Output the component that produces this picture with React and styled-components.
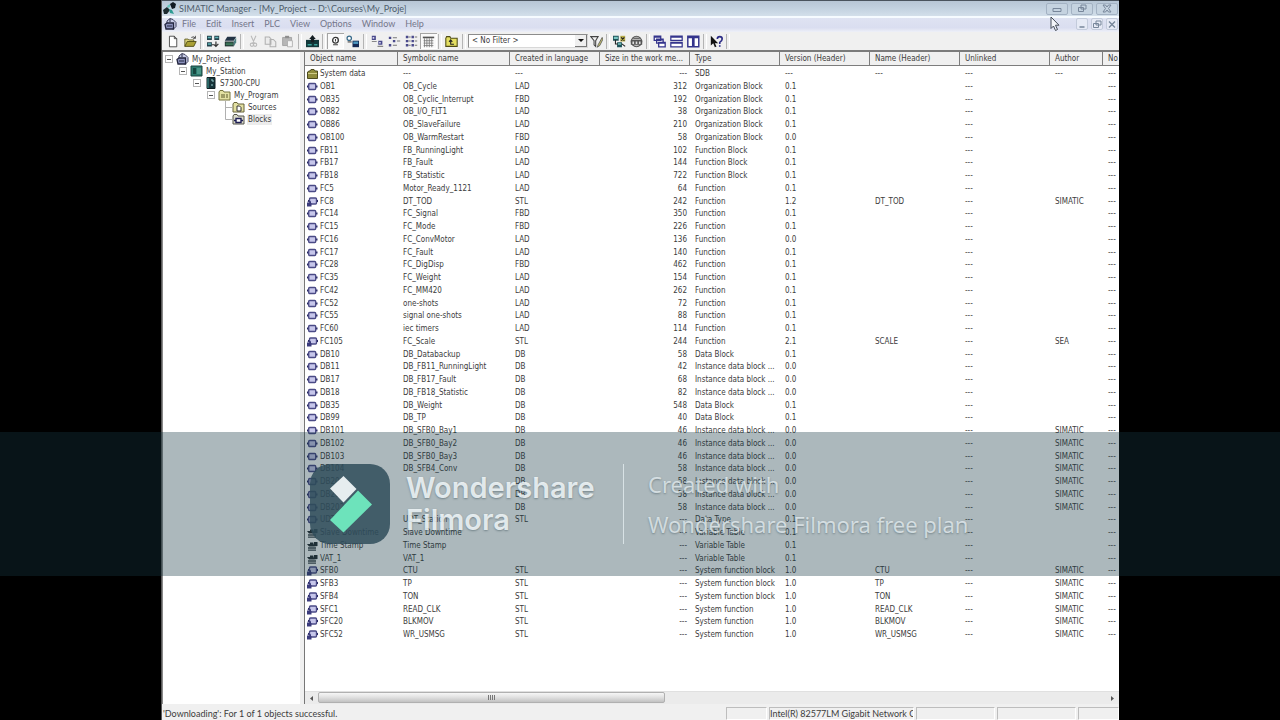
import React, { useState } from 'react';
import styled, { createGlobalStyle, css } from 'styled-components';

const GlobalStyle = createGlobalStyle`
  * {
    box-sizing: border-box;
  }
  body {
    margin: 0;
    background: #000;
    color: #3c3c3c;
    font-family: "DejaVu Sans Condensed", "Liberation Sans", sans-serif;
    font-size: 8px;
    line-height: 12px;
  }
  button, select {
    font: inherit;
    color: inherit;
    padding: 0;
    margin: 0;
    border: 0;
    background: none;
  }
  svg {
    display: block;
    flex-shrink: 0;
  }
`;

const Stage = styled.div`
  position: relative;
  min-height: 100vh;
  padding: 0 161px;
  display: flex;
`;

const Window = styled.div`
  position: relative;
  flex: 1;
  min-width: 0;
  display: flex;
  flex-direction: column;
  background: #f0f0f0;
  border-top: 1px solid #4a545e;
  border-left: 1px solid #5a5a5a;
`;

const TitleBar = styled.header`
  display: flex;
  align-items: center;
  height: 15px;
  padding-left: 1px;
  gap: 3px;
  background: linear-gradient(#b7c6d5, #c3d2e0 50%, #d3dfea);
`;

const Title = styled.h1`
  flex: 1;
  margin: 0;
  font: 400 9px/14px Lato, "Open Sans", sans-serif;
  color: #4e5c6c;
  white-space: nowrap;
`;

const CaptionButtons = styled.div`
  display: flex;
  gap: 3px;
  padding-right: 1px;
`;

const CaptionButton = styled.button`
  width: ${props => (props.$small ? 12 : 22)}px;
  height: 12px;
  display: flex;
  align-items: center;
  justify-content: center;
  border: 1px solid ${props => (props.$small ? '#c3cbdb' : '#a3b2c3')};
  border-radius: 2px;
  color: #77869a;
  background: ${props => (props.$small ? '#e6eaf5' : '#c5d3e0')};
`;

const MenuBar = styled.nav`
  display: flex;
  align-items: center;
  gap: 10px;
  height: 16px;
  padding: 0 0 2px 2px;
  border-top: 2px solid #f6fbff;
  background: linear-gradient(#dfe3f2, #dadef0 70%, #eef0f8);
`;

const MenuItem = styled.button`
  font: 400 9px/12px Lato, "Open Sans", sans-serif;
  color: #74768a;
`;

const MenuIcon = styled.span`
  width: 14px;
  margin-right: -6px;
`;

const MenuSpacer = styled.span`
  flex: 1;
`;

const Toolbar = styled.div`
  display: flex;
  align-items: center;
  height: 18px;
  padding-left: 3px;
`;

const ToolButton = styled.button`
  width: 17px;
  height: 16px;
  display: flex;
  align-items: center;
  justify-content: center;
  ${props => props.$pressed && css`
    background: #fafafa;
    box-shadow: inset 1px 1px 0 #a5a5a5, inset -1px -1px 0 #fff;
  `}
`;

const Separator = styled.span`
  width: ${props => (props.$wide ? 8 : 6)}px;
  height: 15px;
  display: flex;
  justify-content: center;
  &::before {
    content: '';
    width: 2px;
    border-left: 1px solid #b4b4b4;
    border-right: 1px solid #fff;
  }
`;

const Filter = styled.div`
  position: relative;
  width: 120px;
  height: 14px;
  background: #fff;
  border: 1px solid #8c8c8c;
  border-right-color: #d8d8d8;
  border-bottom-color: #d8d8d8;
`;

const FilterSelect = styled.select`
  display: block;
  appearance: none;
  width: 100%;
  height: 12px;
  padding-left: 3px;
  line-height: 12px;
  outline: none;
`;

const FilterArrow = styled.span`
  position: absolute;
  top: 0;
  right: 0;
  width: 12px;
  height: 12px;
  display: flex;
  align-items: center;
  justify-content: center;
  background: #efefef;
  border-right: 1px solid #777;
  border-bottom: 1px solid #777;
  pointer-events: none;
`;

const Panes = styled.main`
  flex: 1;
  display: flex;
  border-top: 2px solid #7b7b7b;
`;

const TreePane = styled.aside`
  width: 138px;
  background: #fff;
  border-left: 1px solid #8a8a8a;
`;

const Tree = styled.ul`
  margin: 0;
  padding: 1px 0 0 2px;
  list-style: none;
`;

const TreeRow = styled.li`
  display: flex;
  align-items: center;
  height: 12px;
  padding-left: ${props => props.$level * 14}px;
`;

const Expander = styled.button`
  width: 8px;
  height: 8px;
  margin-right: 3px;
  display: flex;
  align-items: center;
  justify-content: center;
  border: 1px solid #b5b5b5;
  background: #fff;
  &::before {
    content: '';
    width: 4px;
    height: 1px;
    background: #555;
  }
`;

const Branch = styled.span`
  width: 11px;
  height: 12px;
`;

const TreeLabel = styled.span`
  margin-left: 2px;
  padding: 0 1px;
  line-height: 11px;
  background: ${props => (props.$selected ? '#ececec' : 'none')};
`;

const ListPane = styled.section`
  flex: 1;
  min-width: 0;
  display: flex;
  flex-direction: column;
  margin-left: 4px;
  border-left: 1px solid #777;
  background: #fff;
`;

const ListBody = styled.div`
  flex: 1;
  overflow: hidden;
`;

const Table = styled.table`
  width: 100%;
  table-layout: fixed;
  border-collapse: separate;
  border-spacing: 0;
  white-space: nowrap;
`;

const HeadCell = styled.th`
  height: 13px;
  padding: 1px 0 0 5px;
  overflow: hidden;
  text-align: left;
  font-weight: 400;
  line-height: 12px;
  background: #f0f0f0;
  border-right: 1px solid #7d7d7d;
  border-bottom: 1px solid #7d7d7d;
  &:last-child {
    border-right: 0;
  }
`;

const Col = styled.col`
  width: ${props => (props.$width ? `${props.$width}px` : 'auto')};
`;

const Body = styled.tbody`
  &::before {
    content: '';
    display: table-row;
    height: 1px;
  }
`;

const Row = styled.tr`
  height: 13px;
  &:nth-child(4n) {
    height: 12px;
  }
`;

const Cell = styled.td`
  padding: 0 3px 0 5px;
  overflow: hidden;
  vertical-align: middle;
  line-height: 12px;
  text-align: ${props => (props.$right ? 'right' : 'left')};
`;

const NameCell = styled(Cell)`
  padding-left: 2px;
`;

const ObjectName = styled.span`
  display: flex;
  align-items: center;
  gap: 2px;
`;

const ScrollBar = styled.div`
  display: flex;
  height: 13px;
  background: #ebebeb;
  border-top: 1px solid #e0e0e0;
`;

const ScrollArrow = styled.button`
  width: 13px;
  display: flex;
  align-items: center;
  justify-content: center;
`;

const ScrollTrack = styled.div`
  flex: 1;
  display: flex;
`;

const ScrollThumb = styled.div`
  width: 44%;
  display: flex;
  align-items: center;
  justify-content: center;
  height: 11px;
  border: 1px solid #b0b0b0;
  border-radius: 2px;
  background: linear-gradient(#f6f6f6, #e2e2e2 45%, #c2c2c2);
`;

const StatusBar = styled.footer`
  display: flex;
  align-items: flex-end;
  gap: 2px;
  height: 16px;
  padding-left: 1px;
  font: 400 9px/12px Lato, "Open Sans", sans-serif;
`;

const StatusText = styled.span`
  flex: 1;
`;

const StatusPanel = styled.span`
  width: ${props => props.$width}px;
  height: 13px;
  overflow: hidden;
  white-space: nowrap;
  border: 1px solid #bdbdbd;
  border-right-color: #fff;
  border-bottom-color: #fff;
`;

const Cursor = styled.div`
  position: absolute;
  top: 15px;
  right: 59px;
`;

const Watermark = styled.div`
  position: absolute;
  left: 0;
  right: 0;
  top: 60%;
  height: 20%;
  display: flex;
  align-items: center;
  padding-left: 310px;
  background: rgba(22, 56, 68, 0.355);
  color: rgba(244, 250, 252, 0.85);
  text-shadow: 0 1px 2px rgba(50, 70, 80, 0.45);
  pointer-events: none;
`;

const Logo = styled.div`
  width: 80px;
  height: 80px;
  border-radius: 20px;
  background: rgba(47, 76, 90, 0.85);
`;

const Wordmark = styled.div`
  width: 217px;
  margin-left: 16px;
  font: 600 29px/32px Inter, sans-serif;
`;

const Credit = styled.p`
  margin: 0;
  padding-left: 24px;
  border-left: 1px solid rgba(235, 243, 246, 0.7);
  font: 400 22px/40px "Noto Sans", sans-serif;
  color: rgba(238, 246, 249, 0.72);
`;

const toolIcons = {
  new: (
    <path d="M3 1.5h6l3 3v10H3zM9 1.5v3h3" fill="#fff" stroke="#333" />
  ),
  open: (
    <>
      <path d="M1 14V5h4l1 1h6v3" fill="#d9d27a" stroke="#55511c" />
      <path d="M1 14l3-6h11l-3 6z" fill="#a9a034" stroke="#45420f" />
      <path d="M9 3q3-2 5 1M14 1v3h-3" fill="none" stroke="#333" />
    </>
  ),
  network: (
    <>
      <path d="M0 1h6v5H0zM9 1h6v5H9zM0 9h6v5H0z" fill="#24424c" />
      <path d="M1 2h4v2H1zM10 2h4v2h-4zM1 10h4v2H1z" fill="#61b6b9" />
      <path d="M11 8v6M9 12l2 2 3-3M6 12h3" fill="none" stroke="#333" strokeWidth="1.5" />
    </>
  ),
  stack: (
    <>
      <path d="M4 2h11l-3 5H1z" fill="#234" />
      <path d="M1 8h11v6H1z" fill="#1d2b2c" />
      <path d="M12 8l3-5v6l-3 5z" fill="#4b7f80" />
      <path d="M2 10h9M2 12h9" stroke="#7fa" strokeWidth=".6" />
    </>
  ),
  cut: (
    <path d="M5 1l4 9M11 1L7 10M6 10a2 2 0 1 0 0 4 2 2 0 0 0 0-4M10 10a2 2 0 1 0 0 4 2 2 0 0 0 0-4" fill="none" stroke="#b9b9b9" strokeWidth="1.3" />
  ),
  copy: (
    <path d="M1.500 2.500h5l2 2v7h-7zM7.500 5.500h4l3 3v6h-7z" fill="#ececec" stroke="#b0b0b0" strokeWidth="1.300" />
  ),
  paste: (
    <>
      <path d="M2 3h11v10H2z" fill="#b6b6b6" stroke="#9b9b9b" />
      <path d="M5 1h5v3H5z" fill="#8e8e8e" />
      <path d="M8 7h6v7.500H8z" fill="#f5f5f5" stroke="#aaa" />
    </>
  ),
  download: (
    <>
      <path d="M0 6h16v9H0z" fill="#12383a" />
      <path d="M8 0l4 5H10v4H6V5H4z" fill="#151f22" />
      <path d="M2 11h5v2H2zM10 11h4v2h-4z" fill="#3aa39b" />
    </>
  ),
  online: (
    <>
      <circle cx="8" cy="6.500" r="3.500" fill="#fff" stroke="#333" strokeWidth="1.600" />
      <path d="M8 5v3M5 12h6" stroke="#444" strokeWidth="1.300" />
    </>
  ),
  offline: (
    <>
      <circle cx="4" cy="4" r="2.700" fill="#fff" stroke="#376a8a" strokeWidth="1.500" />
      <path d="M2 8.500h5" fill="none" stroke="#555" strokeWidth="1.500" />
      <path d="M8 7h8v8H8z" fill="#142a55" />
      <path d="M9 8h6v3H9z" fill="#4c97bf" />
    </>
  ),
  large: (
    <>
      <path d="M1 1h5v5H1zM9 7h5v5H9z" fill="#4a4a8c" />
      <path d="M2 2.500h2v2H2zM10 8.500h2v2h-2z" fill="#d5d5ee" />
      <path d="M1 8h6M8 14h7" stroke="#888" strokeWidth="1.500" />
    </>
  ),
  small: (
    <>
      <path d="M1 2h3v3H1zM6 6h3v3H6zM1 11h3v3H1z" fill="#4a4a8c" />
      <path d="M6 3.500h5M11 7.500h4M6 12.500h5" stroke="#777" strokeWidth="1.300" />
    </>
  ),
  list: (
    <>
      <path d="M1 1h3v3H1zM1 6h3v3H1zM1 11h3v3H1zM8 1h3v3H8zM8 6h3v3H8zM8 11h3v3H8z" fill="#4a4a8c" />
      <path d="M4 2.500h3M4 7.500h3M4 12.500h3M12 2.500h3M12 7.500h3M12 12.500h3" stroke="#777" strokeWidth="1.300" />
    </>
  ),
  details: (
    <>
      <path d="M1 2h14v2H1z" fill="#555" />
      <path d="M3 4v11M6 4v11M9 4v11M12 4v11M2 7h12M2 10h12M2 13h12" stroke="#777" />
    </>
  ),
  up: (
    <>
      <path d="M1 14V4l1-2h4l1 2h8v10z" fill="#e4df62" stroke="#4f4c15" strokeWidth="1.300" />
      <path d="M11 11.500H7V7M5 8.500l2-2.500 2 2.500" fill="none" stroke="#222" strokeWidth="1.300" />
    </>
  ),
  filter: (
    <>
      <path d="M1 2h9L7 7v7L5 12V7z" fill="#f2f2f2" stroke="#444" strokeWidth="1.300" />
      <path d="M15 3l-5 9-1 3 3-2 4-8z" fill="#c8c16d" stroke="#555" />
    </>
  ),
  netpro: (
    <>
      <path d="M0 1h7v6H0zM5 9h6v6H5z" fill="#1c5157" />
      <path d="M9 1h6v7H9z" fill="#b6ab47" />
      <path d="M10 3l4 4M14 3l-4 4M3 6v5h3M11 11l4 3" stroke="#222" strokeWidth="1.300" fill="none" />
      <path d="M1 2h5v3H1zM6 10h4v2H6z" fill="#79c4c2" />
    </>
  ),
  simulate: (
    <>
      <circle cx="8" cy="8" r="6.500" fill="#c2c2c2" stroke="#555" strokeWidth="1.300" />
      <path d="M1 6h14v6H1z" fill="#555" />
      <path d="M3 8h2v3H3zM7 8h2v3H7zM11 8h2v3h-2z" fill="#ddd" />
      <path d="M4 4h8" stroke="#333" />
    </>
  ),
  cascade: (
    <path d="M1.500 1.500h8v5h-8zM4.500 5h8v5h-8zM7 9h8v5.500H7zM1.500 2.500h8M4.500 6h8M7 10h8" fill="#fff" stroke="#34348c" strokeWidth="1.600" />
  ),
  tileH: (
    <path d="M1 1.500h14v5H1zM1 9h14v5.500H1zM1 2.500h14M1 10h14" fill="#fff" stroke="#34348c" strokeWidth="1.500" />
  ),
  tileV: (
    <path d="M1 1.500h6v13H1zM8.500 1.500h6v13h-6zM1 3h14" fill="#fff" stroke="#34348c" strokeWidth="1.800" />
  ),
  help: (
    <>
      <path d="M1 1v12l3-3 2 5 2-1-2-4h4z" fill="#111" />
      <path d="M9 5q0-3 3-3t3 3q0 2-3 4v2M12 12.500v2" fill="none" stroke="#2c2c86" strokeWidth="2" />
    </>
  ),
};

const toolGroups = [
  ['new', 'open'],
  ['network', 'stack'],
  ['cut', 'copy', 'paste'],
  ['download'],
  ['online', 'offline'],
  ['large', 'small', 'list', 'details'],
  ['up'],
];

const windowGroups = [['netpro', 'simulate'], ['cascade', 'tileH', 'tileV'], ['help']];
const wideAfter = ['paste', 'offline', 'up'];
const pressed = ['online', 'details'];

const menus = ['File', 'Edit', 'Insert', 'PLC', 'View', 'Options', 'Window', 'Help'];

const tree = [
  { label: 'My_Project', level: 0, icon: 'project' },
  { label: 'My_Station', level: 1, icon: 'station' },
  { label: 'S7300-CPU', level: 2, icon: 'cpu' },
  { label: 'My_Program', level: 3, icon: 'program' },
  { label: 'Sources', level: 4, icon: 'sources', leaf: true },
  { label: 'Blocks', level: 4, icon: 'blocks', leaf: true },
];

const columns = [
  ['Object name', 93],
  ['Symbolic name', 112],
  ['Created in language', 90],
  ['Size in the work me...', 90],
  ['Type', 90],
  ['Version (Header)', 90],
  ['Name (Header)', 90],
  ['Unlinked', 90],
  ['Author', 53],
  ['No'],
];

const OB = 'Organization Block';
const FB = 'Function Block';
const FC = 'Function';
const DB = 'Data Block';
const IDB = 'Instance data block ...';
const VT = 'Variable Table';
const SFB = 'System function block';
const SFC = 'System function';

// icon, name, symbol, language, size, type, version, header name, author
const objects = [
  ['folder', 'System data', '---', '---', '---', 'SDB', '---', '---', '---'],
  ['block', 'OB1', 'OB_Cycle', 'LAD', 312, OB, '0.1'],
  ['block', 'OB35', 'OB_Cyclic_Interrupt', 'FBD', 192, OB, '0.1'],
  ['block', 'OB82', 'OB_I/O_FLT1', 'LAD', 38, OB, '0.1'],
  ['block', 'OB86', 'OB_SlaveFailure', 'LAD', 210, OB, '0.1'],
  ['block', 'OB100', 'OB_WarmRestart', 'FBD', 58, OB, '0.0'],
  ['block', 'FB11', 'FB_RunningLight', 'LAD', 102, FB, '0.1'],
  ['block', 'FB17', 'FB_Fault', 'LAD', 144, FB, '0.1'],
  ['block', 'FB18', 'FB_Statistic', 'LAD', 722, FB, '0.1'],
  ['block', 'FC5', 'Motor_Ready_1121', 'LAD', 64, FC, '0.1'],
  ['locked', 'FC8', 'DT_TOD', 'STL', 242, FC, '1.2', 'DT_TOD', 'SIMATIC'],
  ['block', 'FC14', 'FC_Signal', 'FBD', 350, FC, '0.1'],
  ['block', 'FC15', 'FC_Mode', 'FBD', 226, FC, '0.1'],
  ['block', 'FC16', 'FC_ConvMotor', 'LAD', 136, FC, '0.0'],
  ['block', 'FC17', 'FC_Fault', 'LAD', 140, FC, '0.1'],
  ['block', 'FC28', 'FC_DigDisp', 'FBD', 462, FC, '0.1'],
  ['block', 'FC35', 'FC_Weight', 'LAD', 154, FC, '0.1'],
  ['block', 'FC42', 'FC_MM420', 'LAD', 262, FC, '0.1'],
  ['block', 'FC52', 'one-shots', 'LAD', 72, FC, '0.1'],
  ['block', 'FC55', 'signal one-shots', 'LAD', 88, FC, '0.1'],
  ['block', 'FC60', 'iec timers', 'LAD', 114, FC, '0.1'],
  ['locked', 'FC105', 'FC_Scale', 'STL', 244, FC, '2.1', 'SCALE', 'SEA'],
  ['block', 'DB10', 'DB_Databackup', 'DB', 58, DB, '0.1'],
  ['block', 'DB11', 'DB_FB11_RunningLight', 'DB', 42, IDB, '0.0'],
  ['block', 'DB17', 'DB_FB17_Fault', 'DB', 68, IDB, '0.0'],
  ['block', 'DB18', 'DB_FB18_Statistic', 'DB', 82, IDB, '0.0'],
  ['block', 'DB35', 'DB_Weight', 'DB', 548, DB, '0.1'],
  ['block', 'DB99', 'DB_TP', 'DB', 40, DB, '0.1'],
  ['block', 'DB101', 'DB_SFB0_Bay1', 'DB', 46, IDB, '0.0', '', 'SIMATIC'],
  ['block', 'DB102', 'DB_SFB0_Bay2', 'DB', 46, IDB, '0.0', '', 'SIMATIC'],
  ['block', 'DB103', 'DB_SFB0_Bay3', 'DB', 46, IDB, '0.0', '', 'SIMATIC'],
  ['block', 'DB104', 'DB_SFB4_Conv', 'DB', 58, IDB, '0.0', '', 'SIMATIC'],
  ['block', 'DB200', '', 'DB', 58, IDB, '0.0', '', 'SIMATIC'],
  ['block', 'DB201', '', 'DB', 58, IDB, '0.0', '', 'SIMATIC'],
  ['block', 'DB202', '', 'DB', 58, IDB, '0.0', '', 'SIMATIC'],
  ['block', 'UDT18', 'UDT_Station', 'STL', '---', 'Data Type', '0.1'],
  ['table', 'Slave Downtime', 'Slave Downtime', '', '---', VT, '0.1'],
  ['table', 'Time Stamp', 'Time Stamp', '', '---', VT, '0.1'],
  ['table', 'VAT_1', 'VAT_1', '', '---', VT, '0.1'],
  ['locked', 'SFB0', 'CTU', 'STL', '---', SFB, '1.0', 'CTU', 'SIMATIC'],
  ['locked', 'SFB3', 'TP', 'STL', '---', SFB, '1.0', 'TP', 'SIMATIC'],
  ['locked', 'SFB4', 'TON', 'STL', '---', SFB, '1.0', 'TON', 'SIMATIC'],
  ['locked', 'SFC1', 'READ_CLK', 'STL', '---', SFC, '1.0', 'READ_CLK', 'SIMATIC'],
  ['locked', 'SFC20', 'BLKMOV', 'STL', '---', SFC, '1.0', 'BLKMOV', 'SIMATIC'],
  ['locked', 'SFC52', 'WR_USMSG', 'STL', '---', SFC, '1.0', 'WR_USMSG', 'SIMATIC'],
];

function ToolIcon({ name }) {
  return (
    <svg width="13" height="13" viewBox="0 0 16 16">{toolIcons[name]}</svg>
  );
}

function ToolGroup({ names }) {
  return names.map(name => (
    <ToolButton key={name} aria-label={name} $pressed={pressed.includes(name)}>
      <ToolIcon name={name} />
    </ToolButton>
  ));
}

function ProjectIcon() {
  return (
    <svg width="13" height="12" viewBox="0 0 13 12">
      <path d="M3 5V3l3-2.500 3 1 3 3v4l-3 3" fill="#c7cbe6" stroke="#3c3f5c" />
      <path d="M1 6.500L3 5h6.500v6H2z" fill="#8c92bd" stroke="#23263f" strokeWidth="1.300" />
      <path d="M3 8h5M6 1v3" stroke="#23263f" />
    </svg>
  );
}

const treeIcons = {
  station: (
    <>
      <path d="M1 1h11v10H1z" fill="#2c7a6d" stroke="#1d4540" />
      <path d="M3 3h3v6H3z" fill="#17463f" />
      <path d="M8 3v6M10 3v6" stroke="#6bb3a4" />
    </>
  ),
  cpu: (
    <>
      <path d="M3 .500h8v11H3z" fill="#17343a" stroke="#0e1f22" />
      <path d="M4 1v10" stroke="#3f9c93" />
      <path d="M7 3h2v2M7 8h2" stroke="#9cc" fill="none" />
    </>
  ),
  program: (
    <>
      <path d="M1 11V3l1-1.500h3L6 3h6v8z" fill="#e3e0a2" stroke="#77743e" />
      <path d="M4 5v4M6 5v4M9 5v4" stroke="#5d5a2b" />
    </>
  ),
  sources: (
    <>
      <path d="M1 11V3l1-1.500h3L6 3h6v8z" fill="#e3e0a2" stroke="#66633a" />
      <path d="M5 5h2.500L9 6.500V10H5z" fill="#fff" stroke="#333" />
    </>
  ),
  blocks: (
    <>
      <path d="M1 11V3l1-1.500h3L6 3h6v8z" fill="#dcdccb" stroke="#55554a" />
      <path d="M4 5.500h5v4H4zM2 7.500h2M9 7.500h2" fill="#fff" stroke="#1f1f55" strokeWidth="1.400" />
    </>
  ),
};

function TreeIcon({ name }) {
  if (name === 'project') return <ProjectIcon />;
  return (
    <svg width="13" height="12" viewBox="0 0 13 12">{treeIcons[name]}</svg>
  );
}

const objectIcons = {
  folder: (
    <>
      <path d="M.500 9.500V3L2 2h1l1-1.500h3L8 2h2.500v7.500z" fill="#8f8c3c" stroke="#4d4b1f" />
      <path d="M1 4.500h9" stroke="#cfcb86" />
    </>
  ),
  block: (
    <>
      <path d="M0 4.500h10.500" stroke="#23235e" strokeWidth="2" />
      <rect x="1.700" y="1.500" width="7" height="6" rx="1" fill="#c6c6ea" stroke="#4a4a86" strokeWidth="1.400" />
    </>
  ),
  locked: (
    <>
      <path d="M1 4h10" stroke="#23235e" strokeWidth="2" />
      <rect x="2.500" y="1" width="7" height="6" rx="1" fill="#c6c6ea" stroke="#4a4a86" strokeWidth="1.400" />
      <path d="M0 6h4.500v3.500H0z" fill="#3a3a7c" />
      <path d="M1 6V4.500h2.500V6" fill="none" stroke="#3a3a7c" />
    </>
  ),
  table: (
    <>
      <path d="M0 3h3V1.500h3V4l1-3h3.500v4L7 5.500H2z" fill="#252a30" />
      <path d="M1 7h8M1 9.200h8" stroke="#3d444b" strokeWidth="1.300" />
    </>
  ),
};

function ObjectIcon({ name }) {
  return (
    <svg width="11" height="10" viewBox="0 0 11 10">{objectIcons[name]}</svg>
  );
}

function ObjectRow({ object }) {
  const [icon, name, symbol, language, size, type, version, headerName, author] = object;
  return (
    <Row>
      <NameCell>
        <ObjectName><ObjectIcon name={icon} />{name}</ObjectName>
      </NameCell>
      <Cell>{symbol}</Cell>
      <Cell>{language}</Cell>
      <Cell $right>{size}</Cell>
      <Cell>{type}</Cell>
      <Cell>{version}</Cell>
      <Cell>{headerName}</Cell>
      <Cell>---</Cell>
      <Cell>{author}</Cell>
      <Cell>---</Cell>
    </Row>
  );
}

function CaptionIcon({ name }) {
  const shapes = {
    min: <path d="M1 4.500h8v3H1z" />,
    restore: <path d="M4 1h5v4H4zM1.500 3.500h5v4h-5z" />,
    close: <path d="M1 1h2.500L5 3l1.500-2H9L6.500 4.500 9 8H6.500L5 6 3.500 8H1l2.500-3.500z" />,
    mdiMin: <path d="M2.500 7h5" strokeWidth="1.500" />,
    mdiClose: <path d="M2 1.500l6 6M8 1.500l-6 6" strokeWidth="1.400" />,
  };
  return (
    <svg width="10" height="9" viewBox="0 0 10 9" fill="none" stroke="currentColor">{shapes[name]}</svg>
  );
}

function App() {
  const [selected, setSelected] = useState('Blocks');

  return (
    <Stage>
      <GlobalStyle />
      <Window>
        <TitleBar>
          <svg width="13" height="13" viewBox="0 0 13 13">
            <path d="M7 2l3-2 3 2-1 4-3 1z" fill="#111a22" />
            <path d="M0 8l4-3 3 3-3 4H1z" fill="#1e2c30" />
            <path d="M6 7l3 1 2 4-4-1z" fill="#2d9c93" />
            <path d="M4 4l3-2v3L5 6z" fill="#69c4bd" />
          </svg>
          <Title>SIMATIC Manager - [My_Project -- D:\Courses\My_Proje]</Title>
          <CaptionButtons>
            <CaptionButton aria-label="Minimize"><CaptionIcon name="min" /></CaptionButton>
            <CaptionButton aria-label="Restore"><CaptionIcon name="restore" /></CaptionButton>
            <CaptionButton aria-label="Close"><CaptionIcon name="close" /></CaptionButton>
          </CaptionButtons>
        </TitleBar>
        <MenuBar>
          <MenuIcon><ProjectIcon /></MenuIcon>
          {menus.map(menu => <MenuItem key={menu}>{menu}</MenuItem>)}
          <MenuSpacer />
          <CaptionButtons>
            <CaptionButton $small aria-label="Minimize child"><CaptionIcon name="mdiMin" /></CaptionButton>
            <CaptionButton $small aria-label="Restore child"><CaptionIcon name="restore" /></CaptionButton>
            <CaptionButton $small aria-label="Close child"><CaptionIcon name="mdiClose" /></CaptionButton>
          </CaptionButtons>
        </MenuBar>
        <Toolbar>
          {toolGroups.map(names => (
            <React.Fragment key={names[0]}>
              <ToolGroup names={names} />
              <Separator $wide={wideAfter.includes(names[names.length - 1])} />
            </React.Fragment>
          ))}
          <Filter>
            <FilterSelect aria-label="Filter">
              <option>&lt; No Filter &gt;</option>
            </FilterSelect>
            <FilterArrow>
              <svg width="6" height="3" viewBox="0 0 6 3"><path d="M0 0h6L3 3z" fill="#111" /></svg>
            </FilterArrow>
          </Filter>
          <ToolGroup names={['filter']} />
          {windowGroups.map(names => (
            <React.Fragment key={names[0]}>
              <Separator />
              <ToolGroup names={names} />
            </React.Fragment>
          ))}
          <Separator />
        </Toolbar>
        <Panes>
          <TreePane>
            <Tree>
              {tree.map((node, i) => (
                <TreeRow key={node.label} $level={node.level} onClick={() => setSelected(node.label)}>
                  {node.leaf ? (
                    <Branch>
                      <svg width="11" height="12" viewBox="0 0 11 12">
                        <path d={i === tree.length - 1 ? 'M4.500 0v6.500H11' : 'M4.500 0v12M4.500 6.500H11'} fill="none" stroke="#b0b0b0" />
                      </svg>
                    </Branch>
                  ) : (
                    <Expander aria-label={`Collapse ${node.label}`} />
                  )}
                  <TreeIcon name={node.icon} />
                  <TreeLabel $selected={selected === node.label}>{node.label}</TreeLabel>
                </TreeRow>
              ))}
            </Tree>
          </TreePane>
          <ListPane>
            <ListBody>
              <Table>
                <colgroup>
                  {columns.map(([label, width]) => <Col key={label} $width={width} />)}
                </colgroup>
                <thead>
                  <tr>
                    {columns.map(([label]) => <HeadCell key={label}>{label}</HeadCell>)}
                  </tr>
                </thead>
                <Body>
                  {objects.map(object => <ObjectRow key={object[1]} object={object} />)}
                </Body>
              </Table>
            </ListBody>
            <ScrollBar>
              <ScrollArrow aria-label="Scroll left">
                <svg width="3" height="5" viewBox="0 0 3 5"><path d="M3 0v5L0 2.500z" fill="#555" /></svg>
              </ScrollArrow>
              <ScrollTrack>
                <ScrollThumb>
                  <svg width="7" height="5" viewBox="0 0 7 5">
                    <path d="M.500 0v5M2.500 0v5M4.500 0v5M6.500 0v5" stroke="#777" />
                  </svg>
                </ScrollThumb>
              </ScrollTrack>
              <ScrollArrow aria-label="Scroll right">
                <svg width="3" height="5" viewBox="0 0 3 5"><path d="M0 0v5l3-2.500z" fill="#555" /></svg>
              </ScrollArrow>
            </ScrollBar>
          </ListPane>
        </Panes>
        <StatusBar>
          <StatusText>'Downloading': For 1 of 1 objects successful.</StatusText>
          <StatusPanel $width={41} />
          <StatusPanel $width={145}>Intel(R) 82577LM Gigabit Network Connection</StatusPanel>
          <StatusPanel $width={79} />
          <StatusPanel $width={79} />
          <StatusPanel $width={41} />
        </StatusBar>
        <Cursor>
          <svg width="10" height="16" viewBox="0 0 10 16">
            <path d="M1 1v11.500l2.500-2.500 2 4.500 2-1-2-4.300H9z" fill="#f4f6fa" stroke="#444c58" />
          </svg>
        </Cursor>
      </Window>
      <Watermark>
        <Logo>
          <svg width="80" height="80" viewBox="0 0 80 80">
            <path d="M33.500 12L46.500 25 33.500 38.500 31 36 20 24.500z" fill="#e6edef" />
            <path d="M48 26.500L62 40.500 33.500 68.500 20 56z" fill="#6de3bb" />
          </svg>
        </Logo>
        <Wordmark>Wondershare<br />Filmora</Wordmark>
        <Credit>Created with<br />Wondershare Filmora free plan</Credit>
      </Watermark>
    </Stage>
  );
}

export default App;
